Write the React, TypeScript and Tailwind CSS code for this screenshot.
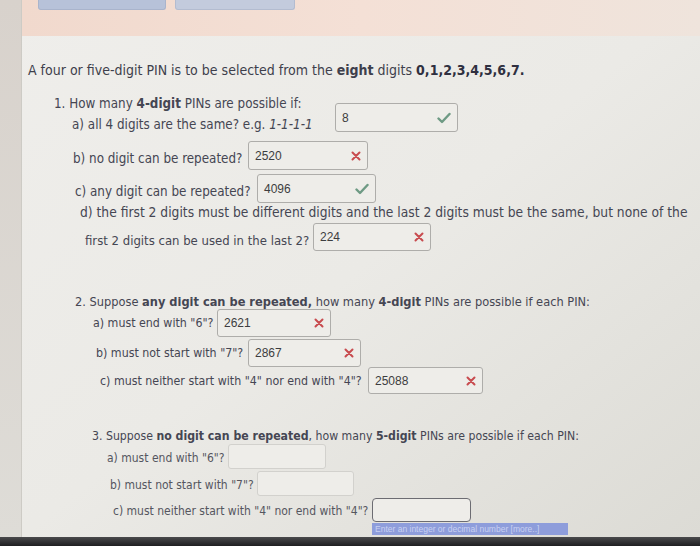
import React from "react";

const Check = () => (
  <svg width="14" height="12" viewBox="0 0 14 12" className="shrink-0">
    <polyline points="1.5,6.5 5,10 12.5,2" fill="none" stroke="#6e9a84" strokeWidth="2.4" strokeLinecap="round" strokeLinejoin="round" />
  </svg>
);

const Cross = () => (
  <svg width="10" height="10" viewBox="0 0 10 10" className="shrink-0">
    <path d="M1.5 1.5 L8.5 8.5 M8.5 1.5 L1.5 8.5" stroke="#c84b4f" strokeWidth="2" strokeLinecap="round" />
  </svg>
);

function Box({ className, value, status }: { className: string; value?: string; status?: "ok" | "bad" }) {
  return (
    <div className={`flex items-center justify-between rounded-[3px] border bg-[#eeede9] pl-[6px] pr-[6px] shrink-0 ${className}`}>
      <span className="font-['Liberation_Sans',Arial,sans-serif] text-[12px] text-[#3d3d40]">{value}</span>
      {status === "ok" && <Check />}
      {status === "bad" && <Cross />}
    </div>
  );
}

export default function App() {
  return (
    <div className="w-[700px] h-[546px] overflow-hidden flex flex-col bg-[#e7e6e2] font-['DejaVu_Sans_Condensed','Liberation_Sans_Narrow','DejaVu_Sans',sans-serif] text-[13px] text-[#454653]">
      <div className="flex flex-1 min-h-0">
        {/* left bezel */}
        <div className="w-[22px] shrink-0 bg-gradient-to-b from-[#d8d2cc] to-[#dedcd7] border-r border-[#cdcbc5]" />
        {/* page */}
        <div className="flex-1 flex flex-col bg-gradient-to-br from-[#efeeeb] via-[#ebeae6] to-[#dcdbd5]">
          {/* top band */}
          <div className="h-[36px] shrink-0 bg-gradient-to-r from-[#f1d9cd] via-[#f4e0d6] to-[#efe4dc] flex items-start gap-[9px] pl-[16px]">
            <div className="w-[128px] h-[10px] rounded-b-[3px] bg-[#b7c2d9] border border-t-0 border-[#a9b4cc]" />
            <div className="w-[120px] h-[10px] rounded-b-[3px] bg-[#c3cbdd] border border-t-0 border-[#b3bcd0]" />
          </div>

          {/* intro */}
          <div className="mt-[24px] h-[20px] pl-[6px] flex items-center whitespace-nowrap text-[14px] text-[#3e3f4c]">
            A four or five-digit PIN is to be selected from the&nbsp;<b className="font-bold">eight</b>&nbsp;digits&nbsp;<span className="text-[#2f3040] font-semibold">0,1,2,3,4,5,6,7.</span>
          </div>

          {/* Q1 */}
          <div className="text-[13.3px]">
            <div className="mt-[16px] h-[16px] leading-[16px] pl-[32px] whitespace-nowrap">
              1. How many <b>4-digit</b> PINs are possible if:
            </div>
            <div className="-mt-[9px] flex items-start pl-[50px]">
              <div className="w-[263px] mt-[14px] leading-[16px] whitespace-nowrap">
                a) all 4 digits are the same? e.g. <i>1-1-1-1</i>
              </div>
              <Box className="w-[123px] h-[29px] border-[#aeadaa]" value="8" status="ok" />
            </div>
            <div className="mt-[8px] flex items-start pl-[51px]">
              <div className="w-[175px] mt-[10px] leading-[16px] whitespace-nowrap">b) no digit can be repeated?</div>
              <Box className="w-[120px] h-[29px] border-[#aeadaa]" value="2520" status="bad" />
            </div>
            <div className="mt-[4px] flex items-start pl-[53px]">
              <div className="w-[182px] mt-[10px] leading-[16px] whitespace-nowrap">c) any digit can be repeated?</div>
              <Box className="w-[119px] h-[29px] border-[#aeadaa]" value="4096" status="ok" />
            </div>
            <div className="mt-[1px] h-[16px] leading-[16px] pl-[58px] whitespace-nowrap text-[13.7px]">
              d) the first 2 digits must be different digits and the last 2 digits must be the same, but none of the
            </div>
            <div className="mt-[3px] flex items-start pl-[63px]">
              <div className="w-[228px] mt-[10px] leading-[16px] whitespace-nowrap text-[13px]">first 2 digits can be used in the last 2?</div>
              <Box className="w-[118px] h-[28px] border-[#aeadaa]" value="224" status="bad" />
            </div>
          </div>

          {/* Q2 */}
          <div className="mt-[43px] h-[16px] leading-[16px] pl-[53px] whitespace-nowrap text-[12.7px]">
            2. Suppose <b>any digit can be repeated,</b> how many <b>4-digit</b> PINs are possible if each PIN:
          </div>
          <div className="text-[12.3px]">
            <div className="-mt-[1px] flex items-start pl-[71px]">
              <div className="w-[124px] mt-[6px] leading-[16px] whitespace-nowrap">a) must end with "6"?</div>
              <Box className="w-[114px] h-[28px] border-[#aeadaa]" value="2621" status="bad" />
            </div>
            <div className="mt-[2px] flex items-start pl-[74px]">
              <div className="w-[152px] mt-[6px] leading-[16px] whitespace-nowrap">b) must not start with "7"?</div>
              <Box className="w-[113px] h-[28px] border-[#aeadaa]" value="2867" status="bad" />
            </div>
            <div className="flex items-start pl-[78px]">
              <div className="w-[268px] mt-[6px] leading-[16px] whitespace-nowrap">c) must neither start with "4" nor end with "4"?</div>
              <Box className="w-[115px] h-[27px] border-[#aeadaa]" value="25088" status="bad" />
            </div>
          </div>

          {/* Q3 */}
          <div className="mt-[34px] h-[16px] leading-[16px] pl-[70px] whitespace-nowrap text-[12.2px]">
            3. Suppose <b>no digit can be repeated</b>, how many <b>5-digit</b> PINs are possible if each PIN:
          </div>
          <div className="text-[12px] text-[#55565f]">
            <div className="flex items-start pl-[85px]">
              <div className="w-[121px] mt-[6px] leading-[16px] whitespace-nowrap">a) must end with "6"?</div>
              <Box className="w-[98px] h-[25px] border-[#d2d1cd]" />
            </div>
            <div className="mt-[2px] flex items-start pl-[88px]">
              <div className="w-[147px] mt-[6px] leading-[16px] whitespace-nowrap">b) must not start with "7"?</div>
              <Box className="w-[97px] h-[25px] border-[#d2d1cd]" />
            </div>
            <div className="mt-[2px] flex items-start pl-[91px]">
              <div className="w-[259px] mt-[5px] leading-[16px] whitespace-nowrap">c) must neither start with "4" nor end with "4"?</div>
              <Box className="w-[99px] h-[24px] border-[#6c6c72] rounded-[4px]" />
            </div>
          </div>
          <div className="mt-[1px] pl-[350px] flex">
            <div className="w-[196px] h-[12px] bg-[#8e9ddb] text-[#c9d1f2] text-[8.5px] leading-[12px] px-[3px] whitespace-nowrap font-['Liberation_Sans',Arial,sans-serif]">
              Enter an integer or decimal number [more..]
            </div>
          </div>
        </div>
      </div>
      {/* bottom bezel */}
      <div className="h-[9px] shrink-0 bg-gradient-to-b from-[#4a4a4c] to-[#1f1f21]" />
    </div>
  );
}
